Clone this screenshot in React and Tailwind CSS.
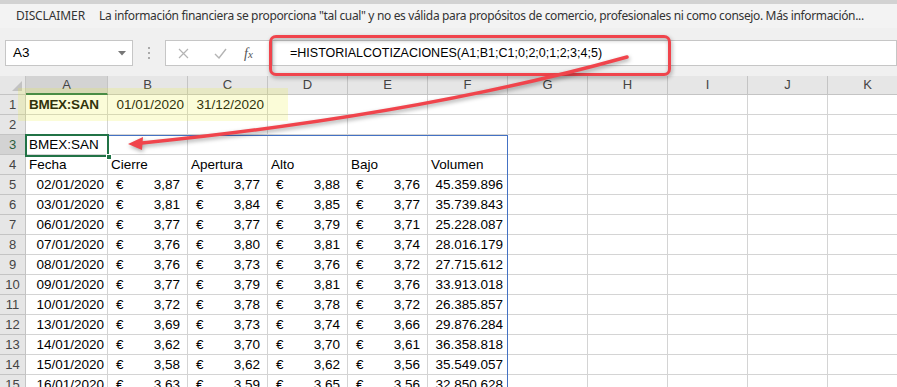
import React from "react";

const COLS = ["A", "B", "C", "D", "E", "F", "G", "H", "I", "J", "K"];

const DATA = [
  ["02/01/2020", "3,87", "3,77", "3,88", "3,76", "45.359.896"],
  ["03/01/2020", "3,81", "3,84", "3,85", "3,77", "35.739.843"],
  ["06/01/2020", "3,77", "3,77", "3,79", "3,71", "25.228.087"],
  ["07/01/2020", "3,76", "3,80", "3,81", "3,74", "28.016.179"],
  ["08/01/2020", "3,76", "3,73", "3,76", "3,72", "27.715.612"],
  ["09/01/2020", "3,77", "3,79", "3,81", "3,76", "33.913.018"],
  ["10/01/2020", "3,72", "3,78", "3,78", "3,72", "26.385.857"],
  ["13/01/2020", "3,69", "3,73", "3,74", "3,66", "29.876.284"],
  ["14/01/2020", "3,62", "3,70", "3,70", "3,61", "36.358.818"],
  ["15/01/2020", "3,58", "3,62", "3,62", "3,56", "35.549.057"],
  ["16/01/2020", "3,63", "3,59", "3,65", "3,56", "32.850.628"],
];

const cellFont = { fontFamily: '"Liberation Sans", Arial, sans-serif' };

function Euro({ v }) {
  return (
    <div className="flex w-full justify-between pl-[8px] pr-[7px]">
      <span>€</span>
      <span>{v}</span>
    </div>
  );
}

function Row({ n, cells = [], selected }) {
  return (
    <div className="flex h-[20px]">
      <div
        className={`flex w-[26px] shrink-0 items-center justify-center border-r border-b border-[#c4c4c4] text-[13px] leading-[16px] ${
          selected ? "bg-[#d3d3d3] text-[#2d5e40]" : "bg-[#e6e6e6] text-[#444]"
        }`}
      >
        {n}
      </div>
      {COLS.map((c, i) => (
        <div
          key={c}
          className={`${i === 0 ? "w-[82px]" : "w-[80px]"} flex shrink-0 items-end overflow-hidden whitespace-nowrap border-r border-b border-[#d4d4d4] bg-white pb-[1px] text-[13.5px] leading-[16px] text-black`}
        >
          {cells[i]}
        </div>
      ))}
    </div>
  );
}

function Sheet() {
  const rows = [
    {
      n: 1,
      cells: [
        <span className="pl-[3px] font-bold tracking-[-0.3px]">BMEX:SAN</span>,
        <span className="ml-auto pr-[3px]">01/01/2020</span>,
        <span className="ml-auto pr-[3px]">31/12/2020</span>,
      ],
    },
    { n: 2 },
    { n: 3, selected: true, cells: [<span className="pl-[3px]">BMEX:SAN</span>] },
    {
      n: 4,
      cells: ["Fecha", "Cierre", "Apertura", "Alto", "Bajo", "Volumen"].map((t) => (
        <span className="pl-[3px]">{t}</span>
      )),
    },
    ...DATA.map((d, i) => ({
      n: 5 + i,
      cells: [
        <span className="ml-auto pr-[3px]">{d[0]}</span>,
        <Euro v={d[1]} />,
        <Euro v={d[2]} />,
        <Euro v={d[3]} />,
        <Euro v={d[4]} />,
        <span className="ml-auto pr-[4px]">{d[5]}</span>,
      ],
    })),
  ];

  return (
    <div className="relative" style={cellFont}>
      {/* column headers */}
      <div className="flex h-[19px]">
        <div className="relative w-[26px] shrink-0 border-r border-b border-[#c4c4c4] bg-[#e6e6e6]">
          <svg className="absolute right-[3px] bottom-[3px]" width="10" height="10" viewBox="0 0 10 10">
            <polygon points="10,0 10,10 0,10" fill="#c2c2c2" />
          </svg>
        </div>
        {COLS.map((c, i) => (
          <div
            key={c}
            className={`${i === 0 ? "w-[82px] bg-[#d3d3d3] border-b-2 border-b-[#217346]" : "w-[80px] bg-[#e6e6e6] border-b border-b-[#c4c4c4]"} flex shrink-0 items-center justify-center border-r border-r-[#c4c4c4] text-[13px] text-[#444]`}
          >
            {c}
          </div>
        ))}
      </div>
      {rows.map((r) => (
        <Row key={r.n} {...r} />
      ))}

      {/* spill range border */}
      <div className="absolute left-[108px] top-[59px] h-[400px] w-[400px] border-t border-r border-[#4472c4]" />
      {/* active cell */}
      <div className="absolute left-[25px] top-[58px] h-[23px] w-[84px] border-2 border-[#217346]" />
      <div className="absolute left-[106px] top-[78px] h-[6px] w-[6px] border border-white bg-[#217346]" />
      {/* highlighter mark */}
      <div className="absolute left-[18px] top-[12px] h-[33px] w-[270px] bg-[rgba(236,240,60,0.2)]" />
    </div>
  );
}

function FormulaBar() {
  return (
    <div className="flex h-[26px] items-stretch pl-[5px]">
      <div className="flex w-[128px] items-center justify-between border border-[#c6c6c6] bg-white pl-[7px] pr-[6px] text-[13.5px] text-black" style={cellFont}>
        <span>A3</span>
        <svg width="8" height="5" viewBox="0 0 8 5">
          <polygon points="0,0 8,0 4,4.5" fill="#777" />
        </svg>
      </div>
      <div className="flex w-[32px] flex-col items-center justify-center gap-[3px]">
        <span className="h-[2px] w-[2px] bg-[#aaa]" />
        <span className="h-[2px] w-[2px] bg-[#aaa]" />
        <span className="h-[2px] w-[2px] bg-[#aaa]" />
      </div>
      <div className="flex flex-1 items-center border border-[#c6c6c6] bg-white">
        <div className="flex w-[106px] items-center">
          <svg className="ml-[12px]" width="11" height="11" viewBox="0 0 11 11">
            <path d="M1 1 L10 10 M10 1 L1 10" stroke="#b4b4b4" strokeWidth="1.2" />
          </svg>
          <svg className="ml-[25px]" width="13" height="11" viewBox="0 0 13 11">
            <path d="M1 6 L5 10 L12 1" stroke="#b4b4b4" strokeWidth="1.4" fill="none" />
          </svg>
          <span className="ml-[17px] text-[14px] italic text-[#555]" style={{ fontFamily: '"Liberation Serif", serif' }}>
            f<span className="text-[11px]">x</span>
          </span>
        </div>
        <div className="h-full border-l border-[#d4d4d4] pl-[17px] flex items-center text-[12.5px] text-black" style={cellFont}>
          =HISTORIALCOTIZACIONES(A1;B1;C1;0;2;0;1;2;3;4;5)
        </div>
      </div>
    </div>
  );
}

export default function App() {
  return (
    <div className="relative h-[387px] w-[897px] overflow-hidden bg-[#e6e6e6]">
      <div className="h-[4px] bg-[#d2d2d2]" />
      <div
        className="flex h-[24px] items-center bg-[#f3f3f3] pl-[16px] text-[12px] text-[#333] whitespace-nowrap"
        style={{ fontFamily: '"Noto Sans", "Open Sans", sans-serif' }}
      >
        <span className="mr-[14px] tracking-[-0.1px]">DISCLAIMER</span>
        <span className="tracking-[-0.35px]">
          La información financiera se proporciona "tal cual" y no es válida para propósitos de comercio, profesionales ni como consejo. Más información...
        </span>
      </div>
      <div className="bg-[#f0f0f0] pt-[12px] pb-[10px]">
        <FormulaBar />
      </div>
      <Sheet />

      {/* annotations */}
      <div className="absolute left-[269px] top-[35px] h-[41px] w-[402px] rounded-[7px] border-[3px] border-[#f0444c] drop-shadow-[1px_2px_2px_rgba(0,0,0,0.35)]" />
      <svg className="absolute left-0 top-0 drop-shadow-[1px_2px_2px_rgba(0,0,0,0.35)]" width="897" height="387">
        <path d="M627 57 Q 420 115 142 143" stroke="#f0444c" strokeWidth="3.5" fill="none" strokeLinecap="round" />
        <polygon points="128,144 143,137 142,150" fill="#f0444c" />
      </svg>
    </div>
  );
}
